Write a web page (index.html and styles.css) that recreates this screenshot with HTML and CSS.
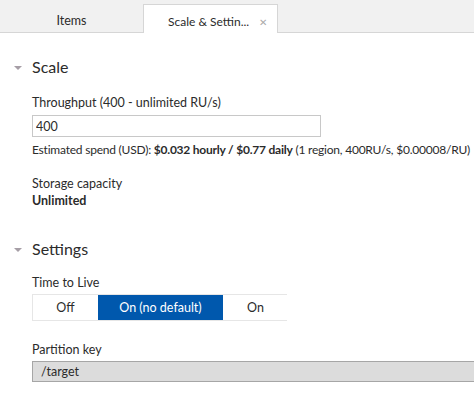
FILE: index.html
```html
<!DOCTYPE html>
<html lang="en">
<head>
    <meta charset="UTF-8">
    <meta name="viewport" content="width=device-width, initial-scale=1.0">
    <title>Scale &amp; Settings</title>
    <link rel="stylesheet" href="styles.css">
</head>
<body>
    <!-- Tab strip -->
    <div class="tabs">
        <div class="tab">Items</div>
        <div class="tab active">Scale &amp; Settin... <span class="close">&#x2715;</span></div>
    </div>

    <div class="content">
        <!-- Scale -->
        <div class="section-head"><span class="caret"></span>Scale</div>
        <div class="field">
            <div class="label">Throughput (400 - unlimited RU/s)</div>
            <input class="text-input" type="text" value="400">
            <div class="estimate">Estimated spend (USD): <b>$0.032 hourly / $0.77 daily</b> (1 region, 400RU/s, $0.00008/RU)</div>
        </div>
        <div class="field storage">
            <div class="label">Storage capacity</div>
            <div class="strong">Unlimited</div>
        </div>

        <!-- Settings -->
        <div class="section-head settings"><span class="caret"></span>Settings</div>
        <div class="field">
            <div class="label">Time to Live</div>
            <div class="toggle">
                <button class="opt">Off</button>
                <button class="opt selected">On (no default)</button>
                <button class="opt">On</button>
            </div>
        </div>
        <div class="field partition">
            <div class="label">Partition key</div>
            <div class="readonly">/target</div>
        </div>
    </div>
</body>
</html>
```

FILE: styles.css
```css
* {
    margin: 0;
    padding: 0;
    box-sizing: border-box;
}

body {
    font-family: Lato, 'Noto Sans', sans-serif;
    font-size: 12.5px;
    color: #2b2b2b;
    background: #fff;
    width: 474px;
    height: 396px;
    overflow: hidden;
}

/* Tabs */
.tabs {
    display: flex;
    align-items: flex-end;
    height: 33px;
    background: #f1f1f1;
    border-bottom: 1px solid #d6d6d6;
}

.tab {
    width: 143px;
    height: 28px;
    line-height: 33px;
    text-align: center;
    font-size: 12.5px;
}

.tab.active {
    width: 135px;
    height: 29px;
    margin-bottom: -1px;
    background: #fff;
    border: 1px solid #d6d6d6;
    border-bottom: none;
    padding-left: 24px;
    line-height: 33px;
    font-size: 12px;
    text-align: left;
}

.close {
    margin-left: 7px;
    font-size: 10px;
    color: #aaa;
}

/* Content */
.content {
    padding: 0 0 0 32px;
}

.section-head {
    position: relative;
    font-size: 16px;
    margin-top: 23px;
    line-height: 22px;
}

.section-head.settings {
    margin-top: 29px;
}

.caret {
    position: absolute;
    left: -18px;
    top: 10px;
    border-left: 4px solid transparent;
    border-right: 4px solid transparent;
    border-top: 4px solid #a69ea6;
}

.field {
    margin-top: 16px;
}

.label {
    line-height: 18px;
}

.text-input {
    display: block;
    width: 289px;
    height: 22px;
    margin-top: 3px;
    padding: 0 3px;
    border: 1px solid #c8c8c8;
    font: inherit;
    color: inherit;
    outline: none;
}

.estimate {
    margin-top: 4px;
    line-height: 18px;
    font-size: 12px;
    letter-spacing: -0.22px;
    white-space: nowrap;
}

.estimate b,
.strong {
    font-weight: bold;
}

.strong {
    line-height: 16px;
}

.settings + .field {
    margin-top: 14px;
}

.toggle {
    display: flex;
    margin-top: 2px;
    width: 255px;
    height: 27px;
    border: 1px solid #e6e6e6;
}

.opt {
    flex: 65px 0 0;
    border: none;
    background: #fff;
    font: inherit;
    color: inherit;
}

.opt.selected {
    flex-basis: 125px;
    background: #0058ad;
    color: #fff;
}

.partition {
    margin-top: 20px;
}

.readonly {
    margin-top: 2px;
    height: 21px;
    line-height: 19px;
    padding-left: 8px;
    background: #dcdcdc;
    border: 1px solid #a6a6a6;
    border-right: none;
}
```
